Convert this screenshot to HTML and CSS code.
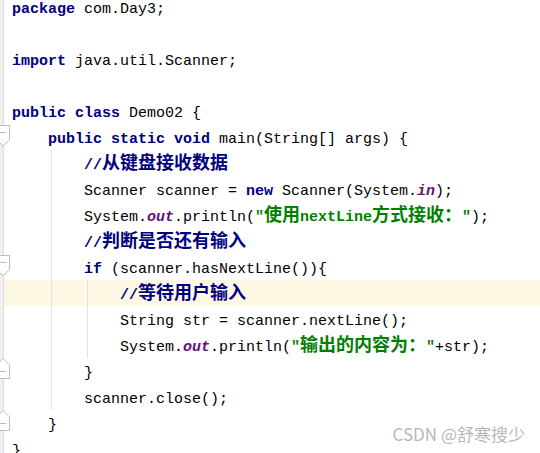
FILE: index.html
```html
<!DOCTYPE html>
<html lang="zh">
<head>
<meta charset="utf-8">
<title>Demo02.java</title>
<link rel="stylesheet" href="styles.css">
</head>
<body>
<div class="editor">
  <div class="gutter"></div>
  <div class="code">
    <div class="ln"><span class="kw">package</span> com.Day3;</div>
    <div class="ln"></div>
    <div class="ln"><span class="kw">import</span> java.util.Scanner;</div>
    <div class="ln"></div>
    <div class="ln"><span class="kw">public class</span> Demo02 {</div>
    <div class="ln">    <span class="kw">public static void</span> main(String[] args) {<svg class="fold" width="14" height="22" viewBox="0 0 14 22"><path d="M0.5 0.5H13.5V14.5L7 21L0.5 14.5Z" fill="#fff" stroke="#bdbdbd"/><path d="M3.5 7.5H10.5" stroke="#bdbdbd"/></svg></div>
    <div class="ln g4">        <span class="cm">//<span class="cn">从键盘接收数据</span></span></div>
    <div class="ln g4">        Scanner scanner = <span class="kw">new</span> Scanner(System.<span class="st">in</span>);</div>
    <div class="ln g4">        System.<span class="st">out</span>.println(<span class="str">"<span class="cn">使用</span>nextLine<span class="cn">方式接收：</span>"</span>);</div>
    <div class="ln g4">        <span class="cm">//<span class="cn">判断是否还有输入</span></span></div>
    <div class="ln g4">        <span class="kw">if</span> (scanner.hasNextLine()){<svg class="fold" width="14" height="22" viewBox="0 0 14 22"><path d="M0.5 0.5H13.5V14.5L7 21L0.5 14.5Z" fill="#fff" stroke="#bdbdbd"/><path d="M3.5 7.5H10.5" stroke="#bdbdbd"/></svg></div>
    <div class="ln g8 cur">            <span class="cm">//<span class="cn">等待用户输入</span></span></div>
    <div class="ln g8">            String str = scanner.nextLine();</div>
    <div class="ln g8">            System.<span class="st">out</span>.println(<span class="str">"<span class="cn">输出的内容为：</span>"</span>+str);</div>
    <div class="ln g4">        }<svg class="fold end" width="14" height="21" viewBox="0 0 14 21"><path d="M7 0.5L13.5 7V20.5H0.5V7Z" fill="#fff" stroke="#bdbdbd"/><path d="M3.5 13.5H10.5" stroke="#bdbdbd"/></svg></div>
    <div class="ln g4">        scanner.close();</div>
    <div class="ln">    }<svg class="fold end" width="14" height="21" viewBox="0 0 14 21"><path d="M7 0.5L13.5 7V20.5H0.5V7Z" fill="#fff" stroke="#bdbdbd"/><path d="M3.5 13.5H10.5" stroke="#bdbdbd"/></svg></div>
    <div class="ln">}</div>
  </div>
</div>
<div class="watermark">CSDN @舒寒搜少</div>
</body>
</html>
```
FILE: styles.css
```css
html, body {
  margin: 0;
  padding: 0;
  background: #ffffff;
}
body {
  width: 540px;
  height: 453px;
  overflow: hidden;
  position: relative;
}
.editor {
  display: flex;
  height: 453px;
}
.gutter {
  width: 3px;
  flex: none;
  background: #f0f0f0;
  border-right: 1px solid #dedede;
}
.code {
  flex: 1;
  margin-top: -6px;
  font-family: "Liberation Mono", "Noto Sans CJK SC", monospace;
  font-size: 15px;
  color: #000000;
}
.ln {
  position: relative;
  box-sizing: border-box;
  height: 26px;
  padding-top: 3px;
  line-height: 26px;
  padding-left: 8px;
  white-space: pre;
}
.cn {
  font-family: "Noto Sans CJK SC", sans-serif;
  font-size: 18px;
  line-height: 16px;
}
.kw {
  color: #000080;
  font-weight: bold;
}
.cm {
  color: #000080;
  font-weight: bold;
}
.str {
  color: #008000;
  font-weight: bold;
}
.st {
  color: #660e7a;
  font-weight: bold;
  font-style: italic;
}
.g4 {
  background-image: linear-gradient(#e2e2e2, #e2e2e2);
  background-position: 47px 0;
  background-size: 1px 100%;
  background-repeat: no-repeat;
}
.g8 {
  background-image: linear-gradient(#e2e2e2, #e2e2e2), linear-gradient(#e2e2e2, #e2e2e2);
  background-position: 47px 0, 83px 0;
  background-size: 1px 100%, 1px 100%;
  background-repeat: no-repeat;
}
.cur {
  background-color: #fdf8e3;
}
.fold {
  position: absolute;
  left: -8px;
  top: 1px;
}
.fold.end {
  top: 0;
}
.watermark {
  position: absolute;
  right: 15px;
  bottom: 7px;
  font-family: "Noto Sans CJK SC", sans-serif;
  font-size: 17px;
  color: #b8b8b8;
}
```
